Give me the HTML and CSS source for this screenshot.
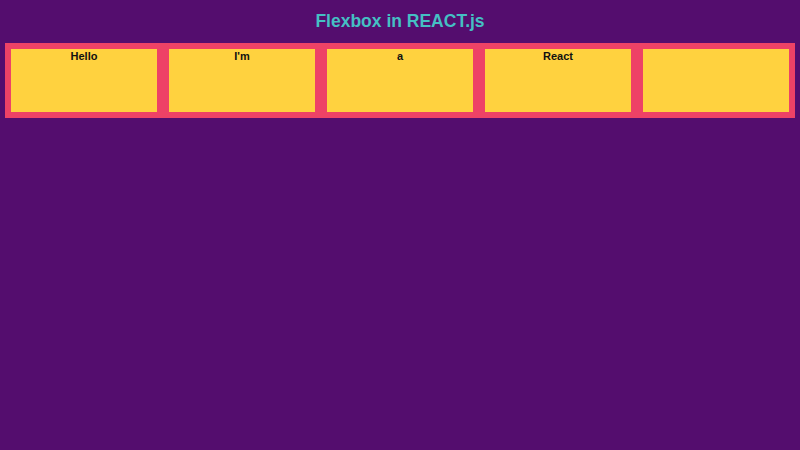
FILE: index.html
```html
<!DOCTYPE html>
<html lang="en">
<head>
  <meta charset="UTF-8">
  <meta name="viewport" content="width=device-width, initial-scale=1.0">
  <title>Flexbox in REACT.js</title>
  <link rel="stylesheet" href="styles.css">
</head>
<body>
  <div class="app">
    <h1 class="title">Flexbox in REACT.js</h1>
    <!-- Flex row of boxes -->
    <div class="flex-container">
      <div class="box">Hello</div>
      <div class="box">I'm</div>
      <div class="box">a</div>
      <div class="box">React</div>
      <div class="box"></div>
    </div>
  </div>
</body>
</html>
```

FILE: styles.css
```css
body {
  margin: 0;
  font-family: "Liberation Sans", Arial, sans-serif;
  background-color: #540d6e;
  height: 100vh;
}
.app {
  padding: 0 5px;
}
.title {
  margin: 0;
  padding-top: 11px;
  height: 32px;
  text-align: center;
  font-size: 17.5px;
  line-height: 20px;
  color: #45bfc3;
}
.flex-container {
  display: flex;
  gap: 12px;
  padding: 6px;
  background-color: #ee4266;
}
.box {
  flex: 1;
  height: 63px;
  background-color: #ffd23f;
  text-align: center;
  font-size: 11px;
  line-height: 14px;
  font-weight: bold;
  color: #111;
}
```
